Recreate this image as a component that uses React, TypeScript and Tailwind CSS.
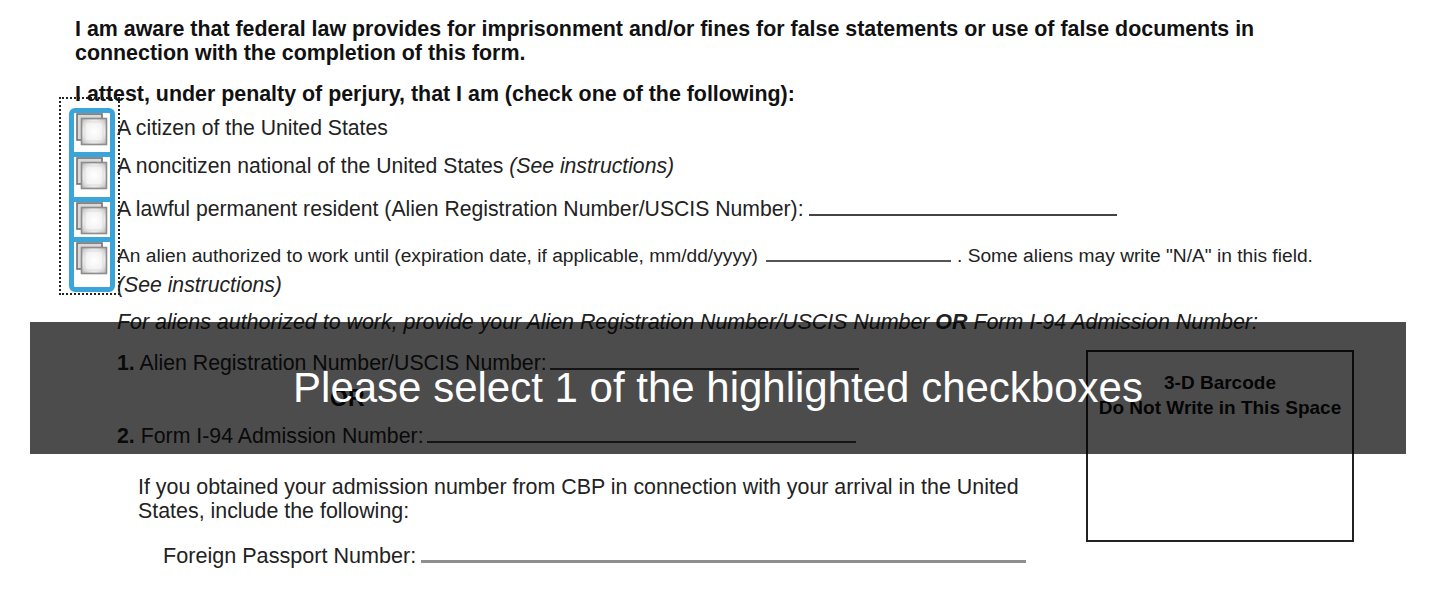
import type { ReactNode } from "react";

function CheckIcon() {
  return (
    <svg width="32" height="33" viewBox="0 0 32 33">
      <defs>
        <radialGradient id="cbFace" cx="50%" cy="50%" r="65%">
          <stop offset="0%" stopColor="#ffffff" />
          <stop offset="60%" stopColor="#f1f1f1" />
          <stop offset="100%" stopColor="#b9b9b9" />
        </radialGradient>
      </defs>
      <rect x="1" y="1" width="25" height="26" fill="#d9d9d9" stroke="#707070" strokeWidth="1.6" />
      <rect x="5.5" y="5.5" width="25" height="26" fill="url(#cbFace)" stroke="#8d8d8d" strokeWidth="1.6" />
      <rect x="9" y="9" width="18" height="19" fill="none" stroke="#dcdcdc" strokeWidth="1" />
    </svg>
  );
}

type RowProps = {
  first?: boolean;
  last?: boolean;
  h: string;
  textMt: string;
  children: ReactNode;
};

function CheckRow({ first, last, h, textMt, children }: RowProps) {
  return (
    <div className={"flex items-start " + h}>
      <div
        className={
          "w-[46px] h-full shrink-0 border-x-[5px] border-t-[5px] border-[#3ba4d8] pl-[2px] bg-white " +
          (first ? "rounded-t-[6px] " : "") +
          (last ? "border-b-[5px] rounded-b-[6px]" : "")
        }
      >
        <CheckIcon />
      </div>
      <div className={"ml-[2px] text-[21.2px] leading-[22px] text-[#222] whitespace-nowrap " + textMt}>{children}</div>
    </div>
  );
}

function Blank({ w, cls = "border-b-2 border-[#444]" }: { w: string; cls?: string }) {
  return <span className={"inline-block align-baseline ml-[3px] " + w + " " + cls} />;
}

export default function App() {
  return (
    <div className="relative w-[1440px] h-[590px] overflow-hidden bg-white font-['Liberation_Sans',Arial,sans-serif] text-[#1a1a1a]">
      <p className="pl-[75px] pt-[17px] text-[21.4px] leading-[24px] font-bold text-[#111] whitespace-nowrap">
        I am aware that federal law provides for imprisonment and/or fines for false statements or use of false documents in
        <br />
        connection with the completion of this form.
      </p>
      <p className="pl-[75px] mt-[17px] text-[21.4px] leading-[24px] font-bold text-[#111]">
        I attest, under penalty of perjury, that I am (check one of the following):
      </p>

      <div className="relative mt-[2px] pl-[69px]">
        <div className="absolute left-[59px] -top-[11px] w-[61px] h-[198px] border-2 border-dotted border-[#222] pointer-events-none" />
        <CheckRow first h="h-[44px]" textMt="mt-[9px]">
          A citizen of the United States
        </CheckRow>
        <CheckRow h="h-[45px]" textMt="mt-[3px]">
          A noncitizen national of the United States <i>(See instructions)</i>
        </CheckRow>
        <CheckRow h="h-[40px]" textMt="mt-[1px]">
          A lawful permanent resident (Alien Registration Number/USCIS Number):
          <Blank w="w-[308px]" cls="border-b-2 border-[#444] ml-[5px]" />
        </CheckRow>
        <CheckRow last h="h-[55px]" textMt="mt-[8px]">
          <div className="text-[19.2px] leading-[22px]">
            An alien authorized to work until (expiration date, if applicable, mm/dd/yyyy)
            <Blank w="w-[185px]" cls="border-b-2 border-[#555] ml-[8px]" />
            <span className="ml-[6px]">. Some aliens may write "N/A" in this field.</span>
          </div>
          <div className="mt-[7px] text-[21.2px] leading-[22px] italic">(See instructions)</div>
        </CheckRow>
      </div>

      <p className="pl-[117px] mt-[19px] text-[21.4px] leading-[22px] italic text-[#222] whitespace-nowrap">
        For aliens authorized to work, provide your Alien Registration Number/USCIS Number <b>OR</b> Form I-94 Admission Number:
      </p>

      <div className="flex mt-[17px]">
        <div className="flex-1 text-[21.3px] text-[#222]">
          <div className="pl-[117px] pt-[2px] leading-[22px] whitespace-nowrap">
            <b>1.</b> Alien Registration Number/USCIS Number:
            <Blank w="w-[309px]" />
          </div>
          <div className="pl-[330px] mt-[11px] text-[23px] leading-[26px] font-bold text-[#111]">OR</div>
          <div className="pl-[117px] mt-[14px] leading-[22px] whitespace-nowrap">
            <b>2.</b> Form I-94 Admission Number:
            <Blank w="w-[429px]" />
          </div>
          <p className="pl-[138px] mt-[28px] text-[21.4px] leading-[24px] whitespace-nowrap">
            If you obtained your admission number from CBP in connection with your arrival in the United
            <br />
            States, include the following:
          </p>
          <div className="pl-[163px] mt-[21px] text-[21.6px] leading-[24px] whitespace-nowrap">
            Foreign Passport Number:
            <Blank w="w-[605px]" cls="border-b-[3px] border-[#8f8f8f] ml-[5px]" />
          </div>
        </div>
        <div className="w-[268px] h-[192px] mr-[86px] shrink-0 border-2 border-[#222] pt-[18px] text-center text-[19px] leading-[25px] font-bold text-[#111]">
          3-D Barcode
          <br />
          Do Not Write in This Space
        </div>
      </div>

      <div className="absolute left-[30px] top-[322px] w-[1376px] h-[132px] bg-black/70 flex items-center justify-center">
        <span className="text-[42px] leading-none text-white">Please select 1 of the highlighted checkboxes</span>
      </div>
    </div>
  );
}
